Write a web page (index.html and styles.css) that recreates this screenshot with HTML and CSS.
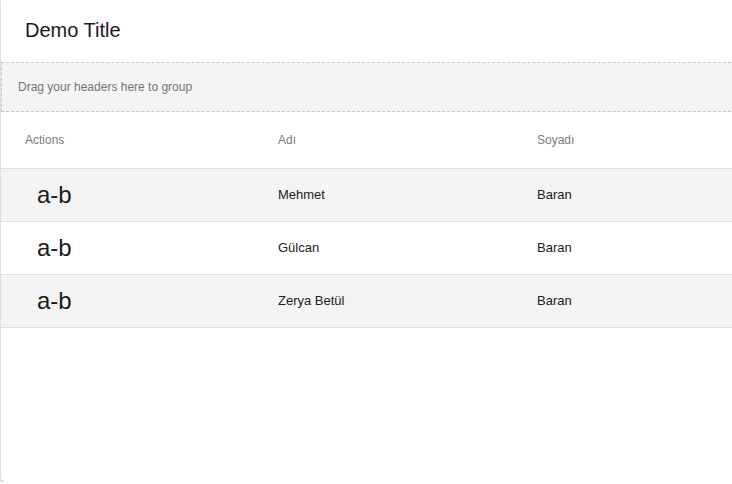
FILE: index.html
```html
<!DOCTYPE html>
<html>
<head>
<meta charset="utf-8">
<link rel="stylesheet" href="styles.css">
</head>
<body>
<div class="card">
  <div class="title">Demo Title</div>
  <div class="group-panel">Drag your headers here to group</div>
  <div class="grid">
    <div class="row head">
      <div class="cell">Actions</div>
      <div class="cell">Adı</div>
      <div class="cell">Soyadı</div>
    </div>
    <div class="row alt">
      <div class="cell action">a-b</div>
      <div class="cell">Mehmet</div>
      <div class="cell">Baran</div>
    </div>
    <div class="row">
      <div class="cell action">a-b</div>
      <div class="cell">Gülcan</div>
      <div class="cell">Baran</div>
    </div>
    <div class="row alt">
      <div class="cell action">a-b</div>
      <div class="cell">Zerya Betül</div>
      <div class="cell">Baran</div>
    </div>
  </div>
  <div class="scroll-thumb"></div>
</div>
</body>
</html>
```
FILE: styles.css
```css
html, body {
  margin: 0;
  padding: 0;
  background: #ffffff;
  overflow: hidden;
  font-family: "Liberation Sans", Arial, sans-serif;
}
.card {
  position: relative;
  margin-left: 1px;
  width: 760px;
  height: 482px;
  background: #fff;
  border-radius: 0 0 0 4px;
  box-shadow: 0 1px 2px rgba(0,0,0,0.4), 0 0 1px rgba(0,0,0,0.25);
}
.title {
  height: 61px;
  padding-bottom: 1px;
  display: flex;
  align-items: center;
  padding-left: 24px;
  font-size: 20px;
  color: #1a1a1a;
}
.group-panel {
  height: 48px;
  display: flex;
  align-items: center;
  padding-left: 16px;
  background: #f4f4f4;
  border: 1px dashed #c8c8c8;
  border-right: none;
  font-size: 12px;
  color: #757575;
}
.row {
  display: grid;
  grid-template-columns: 253px 259px 1fr;
  padding-left: 24px;
  height: 52px;
  align-items: center;
  border-bottom: 1px solid #e0e0e0;
  font-size: 13px;
  color: #212121;
}
.row .cell {
  padding-bottom: 1px;
}
.row.head {
  height: 56px;
  font-size: 12px;
  color: #7b7b7b;
}
.row.alt {
  background: #f4f4f4;
}
.cell.action {
  padding-left: 12px;
  font-size: 24px;
  color: #1a1a1a;
}
.scroll-thumb {
  position: absolute;
  left: 9px;
  top: 482px;
  width: 29px;
  height: 1px;
  background: #888;
}
```
